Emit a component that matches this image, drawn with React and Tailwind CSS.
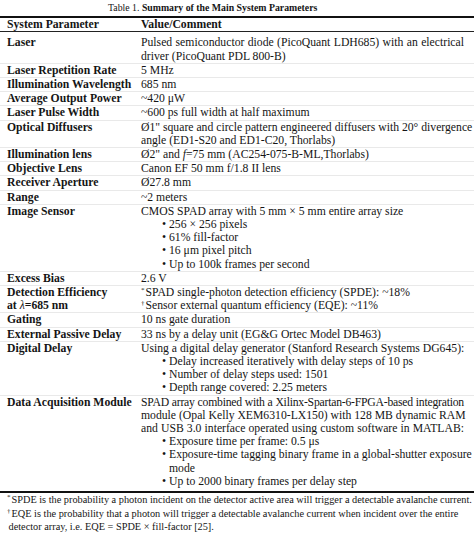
// lines from the source's justified paragraphs are stretched to the column edge
function J({ children, tight }) {
  return <div className={`text-justify [text-align-last:justify] ${tight ? 'tracking-[-0.22px]' : ''}`}>{children}</div>
}

function Sup({ children }) {
  return <span className="text-[7px] leading-none relative -top-[4px] mr-[1px]">{children}</span>
}

const rows = [
  { name: 'Laser', lines: [<J>Pulsed semiconductor diode (PicoQuant LDH685) with an electrical</J>, 'driver (PicoQuant PDL 800-B)'] },
  { name: 'Laser Repetition Rate', lines: ['5 MHz'] },
  { name: 'Illumination Wavelength', lines: ['685 nm'] },
  { name: 'Average Output Power', lines: ['~420 μW'] },
  { name: 'Laser Pulse Width', lines: ['~600 ps full width at half maximum'] },
  { name: 'Optical Diffusers', lines: [<J>Ø1" square and circle pattern engineered diffusers with 20° divergence</J>, 'angle (ED1-S20 and ED1-C20, Thorlabs)'] },
  {
    name: 'Illumination lens',
    lines: [
      <>
        Ø2" and <i>f</i>=75 mm (AC254-075-B-ML,Thorlabs)
      </>,
    ],
  },
  { name: 'Objective Lens', lines: ['Canon EF 50 mm f/1.8 II lens'] },
  { name: 'Receiver Aperture', lines: ['Ø27.8 mm'] },
  { name: 'Range', lines: ['~2 meters'] },
  {
    name: 'Image Sensor',
    lines: ['CMOS SPAD array with 5 mm × 5 mm entire array size'],
    bullets: [['256 × 256 pixels'], ['61% fill-factor'], ['16 μm pixel pitch'], ['Up to 100k frames per second']],
  },
  { name: 'Excess Bias', lines: ['2.6 V'] },
  {
    name: (
      <>
        Detection Efficiency
        <br />
        at <i className="font-normal">λ</i>=685 nm
      </>
    ),
    lines: [
      <>
        <Sup>*</Sup>SPAD single-photon detection efficiency (SPDE): ~18%
      </>,
      <>
        <Sup>†</Sup>Sensor external quantum efficiency (EQE): ~11%
      </>,
    ],
  },
  { name: 'Gating', lines: ['10 ns gate duration'] },
  { name: 'External Passive Delay', lines: ['33 ns by a delay unit (EG&G Ortec Model DB463)'] },
  {
    name: 'Digital Delay',
    lines: ['Using a digital delay generator (Stanford Research Systems DG645):'],
    bullets: [['Delay increased iteratively with delay steps of 10 ps'], ['Number of delay steps used: 1501'], ['Depth range covered: 2.25 meters']],
  },
  {
    name: 'Data Acquisition Module',
    lines: [
      <J tight>SPAD array combined with a Xilinx-Spartan-6-FPGA-based integration</J>,
      <J>module (Opal Kelly XEM6310-LX150) with 128 MB dynamic RAM</J>,
      <J>and USB 3.0 interface operated using custom software in MATLAB:</J>,
    ],
    bullets: [
      ['Exposure time per frame: 0.5 μs'],
      [<J>Exposure-time tagging binary frame in a global-shutter exposure</J>, 'mode'],
      ['Up to 2000 binary frames per delay step'],
    ],
  },
]

export default function App() {
  return (
    <div className="w-[474px] h-[538px] bg-white text-[#151515] overflow-hidden whitespace-nowrap" style={{ fontFamily: '"Liberation Serif", "Times New Roman", serif' }}>
      <p className="h-[16px] pl-[108px] text-[9.8px] leading-[15px]">
        Table 1. <b>Summary of the Main System Parameters</b>
      </p>
      <div className="border-t-2 border-[#111]" />
      <div className="grid grid-cols-[134px_1fr] text-[11.7px] leading-[13px] font-bold h-[13px] pl-[7px]">
        <span>System Parameter</span>
        <span>Value/Comment</span>
      </div>
      <div className="border-t border-[#222]" />
      <div className="pt-[4.4px] pb-[3.4px] text-[11.7px] leading-[13.2px]">
        {rows.map((row, i) => (
          <div key={i} className={`grid grid-cols-[134px_323px] pl-[7px] ${i > 0 ? 'border-t border-[#e9e9e9]' : ''}`}>
            <div className="font-bold">{row.name}</div>
            <div>
              {row.lines.map((l, j) => (
                <div key={j}>{l}</div>
              ))}
              {row.bullets && (
                <ul className="pl-[21px]">
                  {row.bullets.map((b, j) => (
                    <li key={j} className="flex">
                      <span className="w-[7px] shrink-0">•</span>
                      <div className="flex-1">
                        {b.map((t, k) => (
                          <div key={k}>{t}</div>
                        ))}
                      </div>
                    </li>
                  ))}
                </ul>
              )}
            </div>
          </div>
        ))}
      </div>
      <div className="border-t-2 border-[#111]" />
      <div className="pl-[7px] text-[10.3px] leading-[13.5px]">
        <p>
          <Sup>*</Sup>SPDE is the probability a photon incident on the detector active area will trigger a detectable avalanche current.
        </p>
        <p>
          <Sup>†</Sup>EQE is the probability that a photon will trigger a detectable avalanche current when incident over the entire
        </p>
        <p className="pl-[1.5px]">detector array, i.e. EQE = SPDE × fill-factor [25].</p>
      </div>
    </div>
  )
}
